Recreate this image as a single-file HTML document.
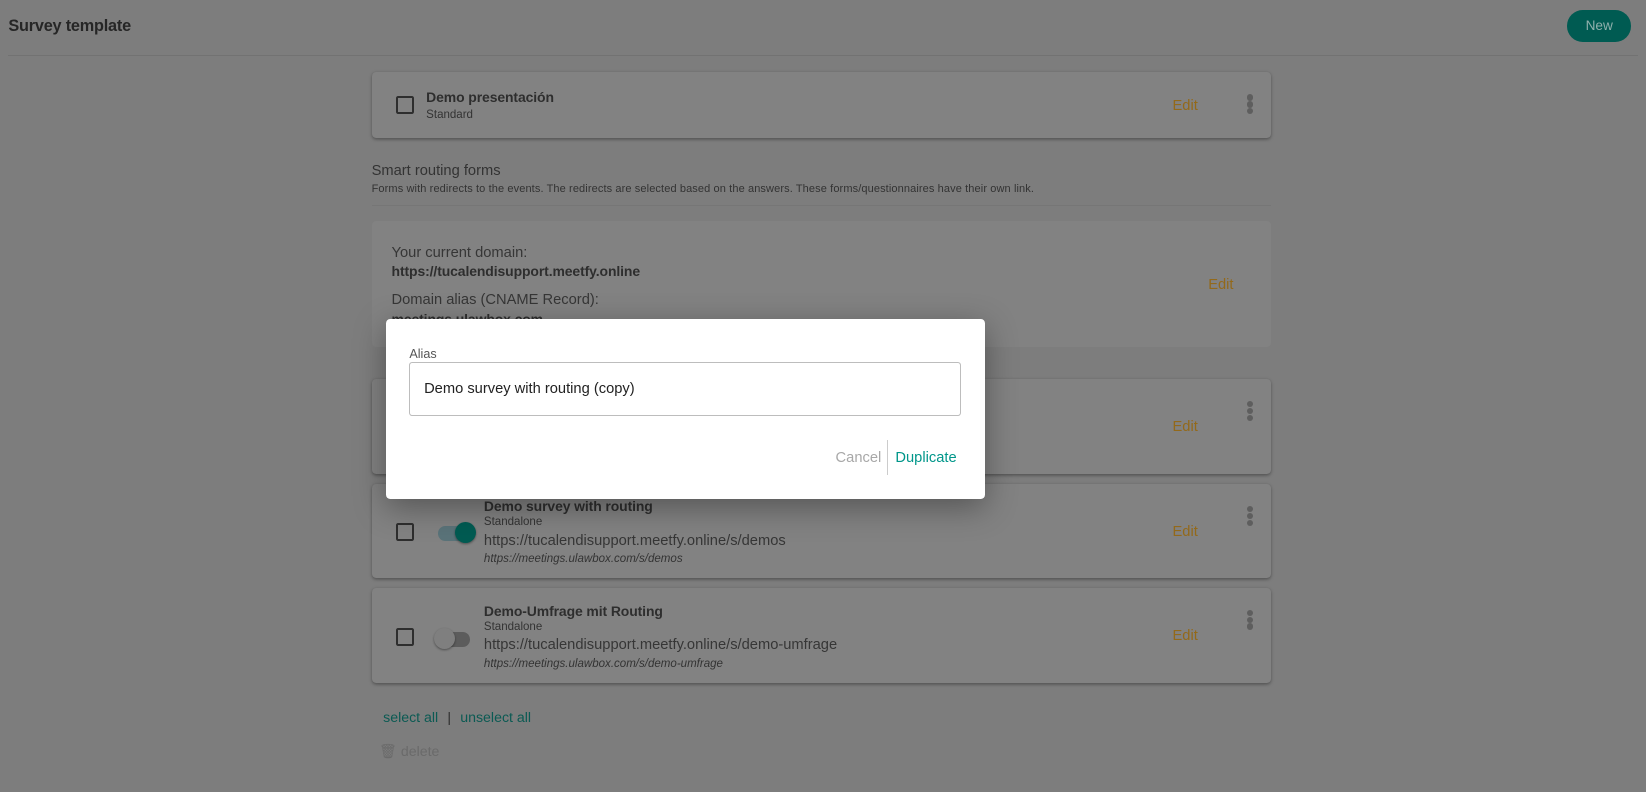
<!DOCTYPE html>
<html><head><meta charset="utf-8"><style>
html,body{margin:0;padding:0}
body{width:1646px;height:792px;overflow:hidden;background:#7d7d7d;font-family:"Liberation Sans",Arial,sans-serif;color:#2e2e2e}
#w{position:relative;width:1568px;height:754px;zoom:1.0497}
.a{position:absolute;white-space:nowrap}
.card{position:absolute;left:354px;width:857px;background:#828282;border-radius:4px;box-shadow:0 1px 3px rgba(0,0,0,.35)}
.cb{position:absolute;width:14px;height:14px;border:2px solid #2e2e2e;border-radius:2px}
.edit{color:#93691a;font-size:14px}
.dots{position:absolute;width:6px}
.dots i{display:block;width:6px;height:6px;border-radius:3px;background:#5e5e5e;margin-bottom:0.5px}
.t{font-weight:bold;font-size:13.3px;color:#2e2e2e;letter-spacing:-0.1px}
.s{font-size:11px;color:#333}
.u{font-size:14px;color:#363636}
.al{font-size:11px;font-style:italic;color:#333}
</style></head><body><div id="w">
<div class="a" style="left:8px;top:16px;font-size:15.5px;font-weight:bold;color:#262626;letter-spacing:-0.2px">Survey template</div>
<div class="a" style="left:1493px;top:10px;width:61px;height:30px;border-radius:15px;background:#005b52;color:#8fb0ac;font-size:13px;text-align:center;line-height:30px">New</div>
<div class="a" style="left:8px;top:52px;width:1552px;height:1px;background:#727272"></div>

<div class="card" style="top:69px;height:62px">
 <div class="cb" style="left:23px;top:22px"></div>
 <div class="a t" style="left:52px;top:16px">Demo presentación</div>
 <div class="a s" style="left:52px;top:35px">Standard</div>
 <div class="a edit" style="left:763px;top:24px">Edit</div>
 <div class="dots" style="left:834px;top:21px"><i></i><i></i><i></i></div>
</div>

<div class="a" style="left:354px;top:155px;font-size:14px;color:#333">Smart routing forms</div>
<div class="a" style="left:354px;top:174px;font-size:10.5px;color:#333;letter-spacing:0.1px">Forms with redirects to the events. The redirects are selected based on the answers. These forms/questionnaires have their own link.</div>
<div class="a" style="left:354px;top:195px;width:857px;height:1px;background:#767676"></div>

<div class="card" style="top:211px;height:120px;box-shadow:none">
 <div class="a" style="left:19px;top:22px;font-size:14px;color:#363636">Your current domain:</div>
 <div class="a t" style="left:19px;top:40px">https://tucalendisupport.meetfy.online</div>
 <div class="a" style="left:19px;top:67px;font-size:14px;color:#363636">Domain alias (CNAME Record):</div>
 <div class="a t" style="left:19px;top:85px">meetings.ulawbox.com</div>
 <div class="a edit" style="left:797px;top:53px">Edit</div>
</div>

<div class="card" style="top:361px;height:91px">
 <div class="a edit" style="left:763px;top:38px">Edit</div>
 <div class="dots" style="left:834px;top:21px"><i></i><i></i><i></i></div>
</div>

<div class="card" style="top:461px;height:90px">
 <div class="cb" style="left:23px;top:37px"></div>
 <div class="a" style="left:63px;top:40px;width:30px;height:14px;border-radius:7px;background:#5a7379"></div>
 <div class="a" style="left:79px;top:36px;width:20px;height:20px;border-radius:10px;background:#005b52;box-shadow:0 1px 2px rgba(0,0,0,.4)"></div>
 <div class="a t" style="left:107px;top:13px">Demo survey with routing</div>
 <div class="a s" style="left:107px;top:31px">Standalone</div>
 <div class="a u" style="left:107px;top:47px">https://tucalendisupport.meetfy.online/s/demos</div>
 <div class="a al" style="left:107px;top:66px">https://meetings.ulawbox.com/s/demos</div>
 <div class="a edit" style="left:763px;top:38px">Edit</div>
 <div class="dots" style="left:834px;top:21px"><i></i><i></i><i></i></div>
</div>

<div class="card" style="top:560px;height:91px">
 <div class="cb" style="left:23px;top:38px"></div>
 <div class="a" style="left:64px;top:42px;width:30px;height:14px;border-radius:7px;background:#5c5c5c"></div>
 <div class="a" style="left:59px;top:38px;width:20px;height:20px;border-radius:10px;background:#7f7f7f;box-shadow:0 1px 2px rgba(0,0,0,.4)"></div>
 <div class="a t" style="left:107px;top:14px">Demo-Umfrage mit Routing</div>
 <div class="a s" style="left:107px;top:32px">Standalone</div>
 <div class="a u" style="left:107px;top:47px">https://tucalendisupport.meetfy.online/s/demo-umfrage</div>
 <div class="a al" style="left:107px;top:67px">https://meetings.ulawbox.com/s/demo-umfrage</div>
 <div class="a edit" style="left:763px;top:38px">Edit</div>
 <div class="dots" style="left:834px;top:21px"><i></i><i></i><i></i></div>
</div>

<div class="a" style="left:365px;top:676px;font-size:13.5px;color:#0b5a53">select all <span style="color:#2e2e2e;margin:0 5px">|</span> unselect all</div>
<div class="a" style="left:361px;top:709px;font-size:13.5px;color:#6a6a6a">&#128465;&#xFE0E; delete</div>

<div class="a" style="left:368px;top:304px;width:570px;height:171px;background:#fff;border-radius:4px;box-shadow:0 8px 30px rgba(0,0,0,.35)">
 <div class="a" style="left:22px;top:27px;font-size:12px;color:#555">Alias</div>
 <div class="a" style="left:22px;top:41px;width:524px;height:49px;border:1px solid #bdbdbd;border-radius:3px"></div>
 <div class="a" style="left:36px;top:59px;font-size:14px;color:#222">Demo survey with routing (copy)</div>
 <div class="a" style="left:428px;top:125px;font-size:14px;color:#a8a8a8">Cancel</div>
 <div class="a" style="left:477px;top:115px;width:1px;height:34px;background:#ccc"></div>
 <div class="a" style="left:485px;top:125px;font-size:14px;color:#00968a">Duplicate</div>
</div>
</div></body></html>
